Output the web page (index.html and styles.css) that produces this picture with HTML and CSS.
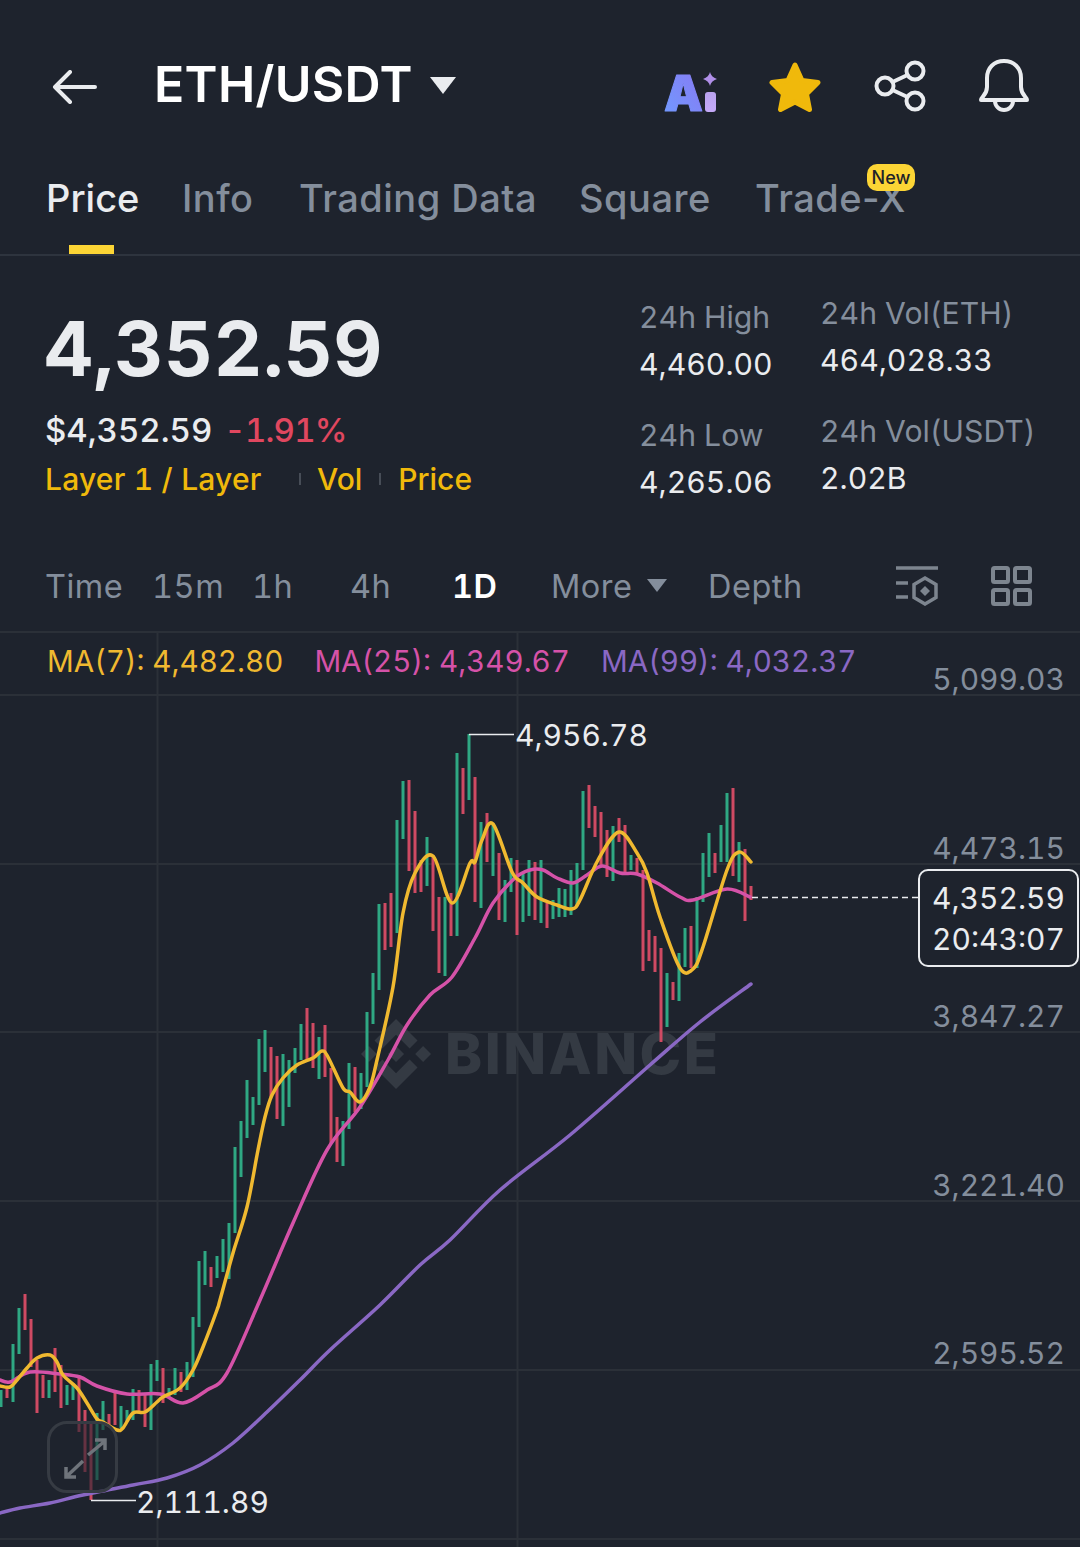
FILE: index.html
```html
<!DOCTYPE html>
<html lang="en">
<head>
    <meta charset="UTF-8">
    <meta name="viewport" content="width=device-width, initial-scale=1.0">
    <title>ETH/USDT</title>
    <link rel="stylesheet" href="styles.css">
</head>
<body>
    <header class="topbar">
        <svg class="back" width="45" height="34" viewBox="0 0 45 34" fill="none" stroke="#eaecef" stroke-width="4" stroke-linecap="round" stroke-linejoin="round"><path d="M43 17H3M18 2L3 17l15 15"/></svg>
        <div class="pair">ETH/USDT</div>
        <div class="caret"></div>
        <div class="top-icons">
            <svg width="56" height="66" viewBox="0 0 56 66">
                <defs>
                    <linearGradient id="aiA" x1="0" y1="1" x2="1" y2="0"><stop offset="0" stop-color="#6f9bff"/><stop offset="1" stop-color="#8a78f2"/></linearGradient>
                    <linearGradient id="aiI" x1="0" y1="0" x2="0" y2="1"><stop offset="0" stop-color="#b9a2ee"/><stop offset="1" stop-color="#c4a9f8"/></linearGradient>
                </defs>
                <text class="ai-letter" x="3" y="51" fill="url(#aiA)" stroke="url(#aiA)">A</text>
                <rect x="44" y="32" width="11" height="20" rx="3" fill="url(#aiI)"/>
                <path d="M49 12q1 5 7 7q-6 2-7 7q-1-5-7-7q6-2 7-7z" fill="#b08fe8"/>
            </svg>
            <svg class="star" width="52" height="50" viewBox="0 0 52 50"><path d="M26 3l7 15.500 16 2-11.500 11.500 3 15.500-14.500-7.500-14.500 7.500 3-15.500L3 20.500l16-2z" fill="#f0b90b" stroke="#f0b90b" stroke-width="5" stroke-linejoin="round"/></svg>
            <svg width="52" height="52" viewBox="0 0 52 52" fill="none" stroke="#eaecef" stroke-width="4"><circle cx="41" cy="11" r="8.500"/><circle cx="11" cy="26" r="8.500"/><circle cx="41" cy="41" r="8.500"/><path d="M18.500 22L33.500 15M18.500 30L33.500 37"/></svg>
            <svg class="bell" width="52" height="54" viewBox="0 0 52 54" fill="none" stroke="#eaecef" stroke-width="4" stroke-linejoin="round"><path d="M3 42c0-3 6-5 6-13v-9C9 10 16 3 26 3s17 7 17 17v9c0 8 6 10 6 13z"/><path d="M17 43a9 9 0 0 0 18 0"/></svg>
        </div>
    </header>

    <nav class="tabs">
        <div class="tab active">Price</div>
        <div class="tab">Info</div>
        <div class="tab">Trading Data</div>
        <div class="tab">Square</div>
        <div class="tab">Trade-X</div>
        <span class="badge">New</span>
    </nav>

    <section class="stats">
        <div class="headline">
            <div class="last-price">4,352.59</div>
            <div class="fiat-row"><span class="fiat">$4,352.59</span><span class="change">-1.91%</span></div>
            <div class="tags"><span class="tag-long">Layer 1 / Layer</span><i class="tick"></i><span>Vol</span><i class="tick"></i><span>Price</span></div>
        </div>
        <div class="figures first">
            <div class="fig-label">24h High</div><div class="fig-value">4,460.00</div>
            <div class="fig-label lower">24h Low</div><div class="fig-value">4,265.06</div>
        </div>
        <div class="figures">
            <div class="fig-label">24h Vol(ETH)</div><div class="fig-value">464,028.33</div>
            <div class="fig-label lower">24h Vol(USDT)</div><div class="fig-value">2.02B</div>
        </div>
    </section>

    <section class="times">
        <span>Time</span>
        <span>15m</span>
        <span>1h</span>
        <span>4h</span>
        <span class="on">1D</span>
        <span class="more">More<i class="more-caret"></i></span>
        <span>Depth</span>
        <svg width="42" height="40" viewBox="0 0 42 40" fill="none" stroke="#7d858f" stroke-width="3.500"><path d="M0 2h42M0 17h12M0 31h12"/><path d="M29 12l11 6.500v13L29 38l-11-6.500v-13z"/><path d="M29 20l5 5-5 5-5-5z" fill="#7d858f" stroke="none"/></svg>
        <svg width="42" height="40" viewBox="0 0 42 40" fill="none" stroke="#7d858f" stroke-width="4"><rect x="3" y="2" width="15" height="14" rx="1.500"/><rect x="25" y="2" width="15" height="14" rx="1.500"/><rect x="3" y="24" width="15" height="14" rx="1.500"/><rect x="25" y="24" width="15" height="14" rx="1.500"/></svg>
    </section>

    <section class="chart">
        <svg class="plot" width="1080" height="916" viewBox="0 631 1080 916" fill="none">
            <path stroke="#2b3038" stroke-width="2" d="M0 632H1080M0 695H1080M0 864H1080M0 1032H1080M0 1201H1080M0 1370H1080M0 1539H1080M157.500 632V1547M517.500 632V1547"/>

            <!-- watermark -->
            <path fill="#343a43" transform="translate(361 1019) scale(.553)" d="M38.730 53.200l24.590-24.580 24.600 24.600 14.300-14.310L63.320 0 24.420 38.900zM0 63.310l14.300-14.310 14.310 14.310-14.310 14.300zM38.730 73.410l24.590 24.590 24.600-24.600 14.310 14.290-38.900 38.910-38.910-38.880-.02-.02zM98.010 63.320l14.300-14.310 14.300 14.310-14.300 14.300zM77.830 63.310l-14.510-14.520-10.730 10.730-1.240 1.230-2.540 2.540 14.520 14.500 14.500-14.480z"/>
            <text class="watermark" x="445" y="1074">BINANCE</text>

            <!-- candles -->
            <path stroke="#2fa883" stroke-width="3" d="M1 1390V1407M13 1344V1402M19 1308V1354M49 1380V1398M67 1385V1405M73 1383V1400M97 1413V1480M103 1401V1430M121 1406V1428M127 1410V1422M133 1389V1420M151 1364V1430M157 1360V1381M169 1388V1397M175 1368V1395M187 1362V1390M193 1317V1377M199 1261V1327M205 1251V1285M217 1256V1278M223 1239V1272M229 1223V1279M235 1147V1233M241 1121V1177M247 1080V1138M253 1097V1125M259 1039V1105M265 1030V1072M283 1054V1126M289 1060V1107M295 1048V1073M301 1024V1060M319 1037V1079M343 1121V1166M349 1063V1129M361 1073V1109M367 1012V1087M373 973V1024M379 904V990M397 820V933M403 781V839M427 837V886M445 897V976M457 753V936M469 734V800M481 822V908M493 823V876M505 880V922M511 858V892M523 872V922M529 860V916M541 860V923M553 900V919M559 888V917M565 889V917M571 870V915M577 863V905M583 791V870M613 826V881M631 855V870M667 973V1027M679 953V1001M685 928V967M697 897V968M703 853V902M709 833V877M721 825V862M727 793V862M739 842V882"/>
            <path stroke="#cf4a63" stroke-width="3" d="M7 1387V1398M25 1294V1330M31 1319V1367M37 1360V1413M43 1375V1398M55 1348V1392M61 1365V1408M79 1377V1432M85 1410V1472M91 1423V1500M109 1414V1427M115 1392V1425M139 1390V1412M145 1395V1427M163 1368V1403M181 1372V1392M211 1267V1287M271 1047V1097M277 1056V1119M307 1008V1060M313 1023V1068M325 1025V1077M331 1068V1143M337 1117V1162M355 1067V1112M385 903V950M391 893V947M409 780V871M415 811V893M421 860V892M433 855V931M439 897V973M451 893V936M463 768V814M475 777V902M487 813V862M499 853V920M517 860V935M535 862V920M547 903V928M589 785V828M595 806V837M601 812V867M607 830V877M619 818V842M625 825V872M637 858V873M643 870V971M649 930V961M655 936V972M661 948V1042M673 982V1000M691 926V968M715 853V873M733 788V876M745 849V921M751 886V900"/>

            <!-- moving averages -->
            <path class="ma" stroke="#8a68c4" data-points="0,1513 20,1508 50,1503 83,1495 133,1485 167,1478 200,1465 233,1443 267,1412 300,1380 330,1350 380,1305 420,1265 450,1240 500,1190 570,1135 650,1065 700,1022 751,984"/>
            <path class="ma" stroke="#d552a8" data-points="0,1380 10,1382 30,1372 60,1374 80,1377 97,1386 127,1394 160,1394 183,1403 207,1390 227,1373 260,1300 293,1223 327,1150 360,1107 388,1060 407,1025 430,995 452,977 475,938 493,903 515,878 530,870 543,870 557,878 573,883 587,875 602,866 620,873 637,874 657,883 680,897 693,900 727,889 750,897"/>
            <path class="ma" stroke="#f0b930" data-points="0,1386 10,1387 17,1380 27,1368 37,1358 50,1355 57,1362 63,1375 77,1388 87,1403 97,1419 103,1422 117,1430 123,1428 133,1413 145,1412 157,1402 163,1397 180,1388 193,1370 203,1347 217,1310 220,1300 233,1253 247,1207 258,1150 265,1117 272,1095 283,1078 297,1065 313,1058 322,1051 328,1057 343,1088 350,1092 360,1102 370,1087 377,1060 393,987 403,913 415,873 433,856 452,903 470,863 475,862 482,840 493,824 512,872 523,883 537,897 557,905 572,909 580,900 598,860 619,832 637,853 647,873 660,917 680,968 693,969 703,947 727,870 739,852 751,862"/>

            <!-- high/low leaders and last price -->
            <path stroke="#eaecef" stroke-width="1.500" d="M469 734.500H514M91 1500.500H136"/>
            <path stroke="#eaecef" stroke-width="1.500" stroke-dasharray="6 4" d="M752 897.500H918"/>
        </svg>

        <div class="legend">
            <span class="ma7">MA(7): 4,482.80</span>
            <span class="ma25">MA(25): 4,349.67</span>
            <span class="ma99">MA(99): 4,032.37</span>
        </div>

        <div class="axis">
            <span>5,099.03</span>
            <span>4,473.15</span>
            <span>3,847.27</span>
            <span>3,221.40</span>
            <span>2,595.52</span>
        </div>

        <div class="mark high">4,956.78</div>
        <div class="mark low">2,111.89</div>

        <div class="now"><span>4,352.59</span><span>20:43:07</span></div>

        <div class="expand">
            <svg width="44" height="44" viewBox="0 0 44 44" fill="none" stroke="#6f747b" stroke-width="3.500"><path d="M2 40l17-16M2 30v10h10"/><path d="M24 18L41 4M31 3h10v10"/></svg>
        </div>
    </section>

    <script src="chart.js"></script>
</body>
</html>
```

FILE: styles.css
```css
* { box-sizing: border-box; }
body {
    margin: 0;
    width: 1080px;
    height: 1547px;
    overflow: hidden;
    background-color: #1e232d;
    color: #eaecef;
    font-family: Inter, "Noto Sans", sans-serif;
    font-variant-numeric: tabular-nums;
}

/* top bar */
.topbar {
    height: 161px;
    padding: 60px 50px 0 52px;
    display: flex;
    align-items: flex-start;
}
.back { margin-top: 10px; }
.pair {
    margin-left: 57px;
    margin-top: -1px;
    font-size: 50px;
    font-weight: 600;
    letter-spacing: .3px;
    line-height: 50px;
    color: #fff;
}
.caret {
    margin: 17px 0 0 17px;
    width: 0;
    height: 0;
    border-left: 13px solid transparent;
    border-right: 13px solid transparent;
    border-top: 17px solid #eaecef;
}
.top-icons {
    margin-left: auto;
    display: flex;
    align-items: flex-start;
    gap: 52px;
}
.top-icons svg { display: block; }
.top-icons .star { margin: 2px 1px 0 0; }
.top-icons .bell { margin-top: -2px; }
.ai-letter {
    font-family: Inter, sans-serif;
    font-size: 49px;
    font-weight: 900;
    stroke-width: 1px;
    stroke-linejoin: round;
}

/* tabs */
.tabs {
    position: relative;
    height: 95px;
    padding-left: 46px;
    display: grid;
    grid-template-columns: 136px 117px 280px 176px auto;
    border-bottom: 2px solid #2e343e;
}
.tab {
    position: relative;
    height: 93px;
    font-size: 38px;
    font-weight: 500;
    font-variant-numeric: normal;
    letter-spacing: .5px;
    line-height: 74px;
    color: #848e9c;
}
.tab.active { color: #eaecef; letter-spacing: 0; }
.tab.active::after {
    content: "";
    position: absolute;
    left: 23px;
    bottom: 0;
    width: 45px;
    height: 9px;
    background-color: #fcd535;
}
.badge {
    position: absolute;
    left: 867px;
    top: 3px;
    width: 48px;
    height: 27px;
    border-radius: 10px;
    background-color: #fcd535;
    color: #1e2329;
    font-size: 18px;
    font-weight: 500;
    line-height: 27px;
    text-align: center;
}

/* price block */
.stats {
    height: 297px;
    position: relative;
    padding-left: 44px;
    display: flex;
}
.headline { width: 595px; padding-top: 48px; }
.last-price {
    font-size: 76px;
    font-weight: 700;
    letter-spacing: .4px;
    line-height: 88px;
}
.fiat-row {
    margin-top: 18px;
    padding-left: 1px;
    display: flex;
    gap: 12px;
    font-size: 33px;
    font-weight: 500;
    line-height: 40px;
}
.change { color: #e0475f; letter-spacing: -.8px; }
.tags {
    margin-top: 9px;
    padding-left: 1px;
    display: flex;
    align-items: center;
    font-size: 30px;
    font-weight: 500;
    line-height: 40px;
    color: #f0b90b;
}
.tag-long { width: 254px; letter-spacing: .2px; }
.tick {
    width: 2px;
    height: 12px;
    margin-right: 16px;
    background-color: #474d57;
}
.tags .tick + span + .tick { margin-left: 17px; margin-right: 17px; }
.figures {
    width: 181px;
    padding-top: 37px;
    font-size: 30.200px;
    line-height: 40px;
    white-space: nowrap;
}
.figures.first { padding-top: 41px; }
.fig-label { color: #848e9c; }
.fig-value { margin-top: 7px; }
.fig-label.lower { margin-top: 31px; }

/* interval row */
.times {
    height: 78px;
    padding: 9px 0 0 45px;
    display: grid;
    grid-template-columns: 107px 100px 98px 102px 99px 157px 188px 94px 42px;
    align-items: start;
    font-size: 32.500px;
    letter-spacing: .5px;
    line-height: 50px;
    color: #848e9c;
}
.times svg { margin-top: 4px; }
.times .on { color: #fff; font-weight: 600; }
.more { display: flex; }
.more-caret {
    margin: 17px 0 0 14px;
    width: 0;
    height: 0;
    border-left: 10px solid transparent;
    border-right: 10px solid transparent;
    border-top: 13px solid #848e9c;
}

/* chart */
.chart {
    position: relative;
    height: 916px;
}
.plot { position: absolute; left: 0; top: 0; }
.ma { stroke-width: 3.500px; stroke-linejoin: round; stroke-linecap: round; }
.watermark {
    font-family: Inter, sans-serif;
    font-size: 56px;
    font-weight: 800;
    letter-spacing: 2.500px;
    fill: #343a43;
}
.legend {
    position: absolute;
    left: 47px;
    top: 10px;
    display: flex;
    gap: 31px;
    font-size: 29.600px;
    line-height: 40px;
}
.ma7 { color: #f0b930; }
.ma25 { color: #d552a8; }
.ma99 { color: #8a68c4; }
.axis {
    position: absolute;
    right: 15px;
    top: 28px;
    display: flex;
    flex-direction: column;
    gap: 128.500px;
    font-size: 30px;
    line-height: 40px;
    text-align: right;
    color: #848e9c;
}
.mark {
    position: absolute;
    font-size: 30px;
    line-height: 40px;
    color: #eaecef;
}
.mark.high { left: 515px; top: 84px; }
.mark.low { left: 136px; top: 851px; }
.now {
    position: absolute;
    left: 918px;
    top: 238px;
    width: 161px;
    height: 98px;
    display: flex;
    flex-direction: column;
    align-items: center;
    padding-top: 7px;
    border: 2px solid #eaecef;
    border-radius: 10px;
    background-color: #1e232d;
    font-size: 30px;
    line-height: 41px;
}
.expand {
    position: absolute;
    left: 47px;
    top: 790px;
    width: 71px;
    height: 72px;
    padding: 13px 0 0 14px;
    border: 3px solid #363b43;
    border-radius: 20px;
    background-color: rgba(30, 35, 45, .6);
}
```

FILE: chart.js
```js
// turn the moving average points into smooth curves (catmull-rom to bezier)
document.querySelectorAll('.ma').forEach((line) => {
    let pts = line.dataset.points.split(' ').map((p) => p.split(',').map(Number));
    let d = 'M' + pts[0].join(' ');
    for (let i = 0; i < pts.length - 1; i++) {
        let p0 = pts[i - 1] || pts[i];
        let p1 = pts[i];
        let p2 = pts[i + 1];
        let p3 = pts[i + 2] || p2;
        let c1 = [p1[0] + (p2[0] - p0[0]) / 6, p1[1] + (p2[1] - p0[1]) / 6];
        let c2 = [p2[0] - (p3[0] - p1[0]) / 6, p2[1] - (p3[1] - p1[1]) / 6];
        d += ' C' + c1.join(' ') + ' ' + c2.join(' ') + ' ' + p2.join(' ');
    }
    line.setAttribute('d', d);
});
```
